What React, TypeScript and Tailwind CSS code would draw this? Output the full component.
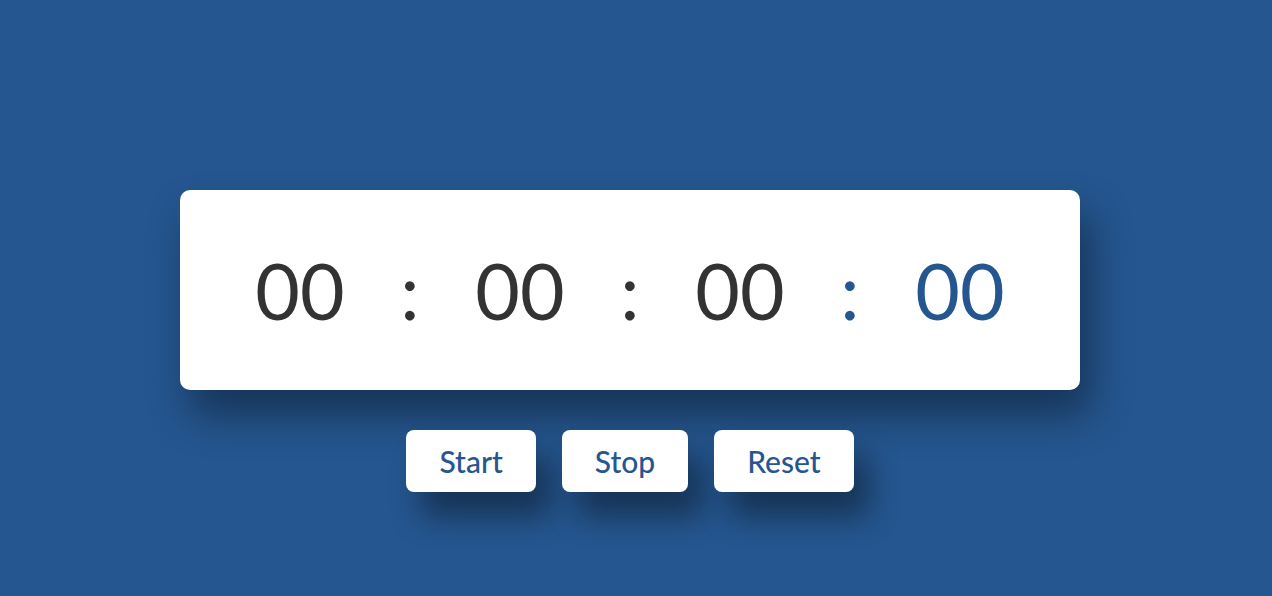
import { useState } from 'react';

const pad = (n: number) => String(n).padStart(2, '0');

export default function App() {
    const [ms] = useState(0);

    const hours = Math.floor(ms / 3600000);
    const minutes = Math.floor(ms / 60000) % 60;
    const seconds = Math.floor(ms / 1000) % 60;
    const centis = Math.floor(ms / 10) % 100;

    return (
        <div className="min-h-screen w-full bg-[#25568f] flex flex-col items-center pt-[190px] pr-3 font-['Lato',sans-serif]">
            <div className="w-[900px] h-[200px] bg-white rounded-[10px] shadow-[10px_25px_40px_rgba(0,0,0,0.4)] grid grid-cols-[repeat(7,110px)] justify-center items-center text-[77px] leading-none text-[#333333]">
                <span className="text-center">{pad(hours)}</span>
                <span className="text-center">:</span>
                <span className="text-center">{pad(minutes)}</span>
                <span className="text-center">:</span>
                <span className="text-center">{pad(seconds)}</span>
                <span className="text-center text-[#25568f]">:</span>
                <span className="text-center text-[#25568f]">{pad(centis)}</span>
            </div>

            <div className="flex gap-[26px] mt-10">
                {['Start', 'Stop', 'Reset'].map((label) => (
                    <button
                        key={label}
                        className="h-[62px] px-[33px] bg-white rounded-lg text-[30px] font-medium text-[#25568f] shadow-[15px_25px_30px_rgba(0,0,0,0.4)]"
                    >
                        {label}
                    </button>
                ))}
            </div>
        </div>
    );
}
